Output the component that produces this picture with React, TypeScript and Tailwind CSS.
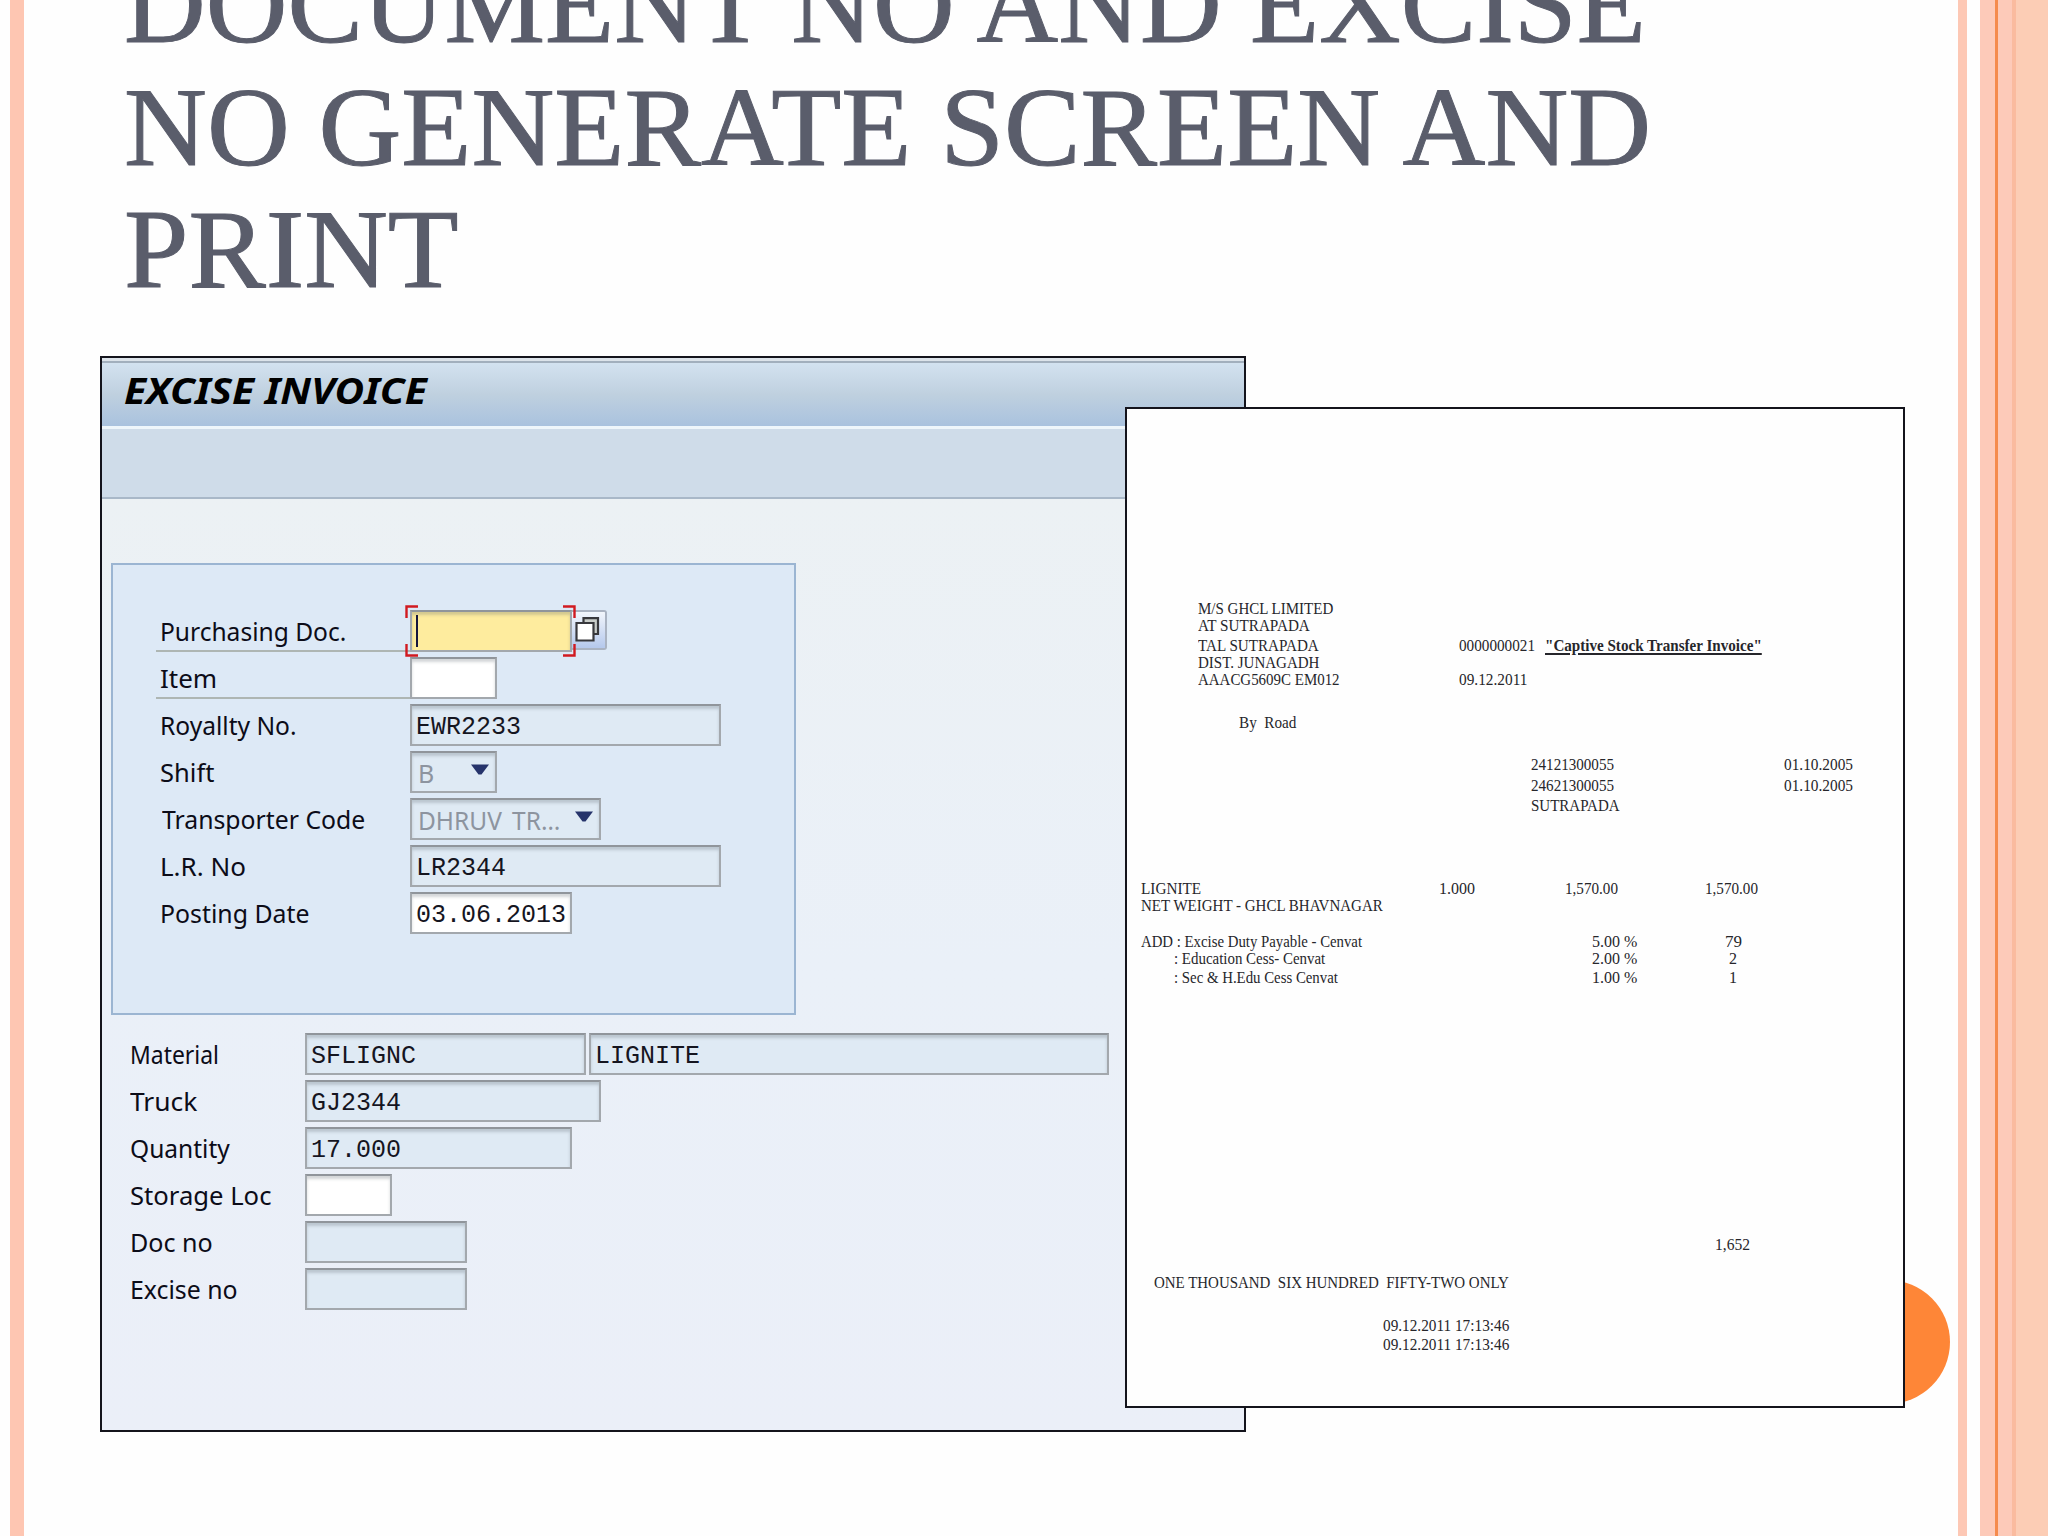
import { useLayoutEffect, useRef, useState, type ReactNode } from 'react';
import clsx from 'clsx';

// ─── Text squeezed to the width of its box ───────────────────────────────────

function Fit({ children, className }: { children: string; className: string }) {
    const box = useRef<HTMLSpanElement>(null);
    const text = useRef<HTMLSpanElement>(null);
    const [scale, setScale] = useState(1);

    useLayoutEffect(() => {
        if (box.current && text.current) {
            setScale(box.current.clientWidth / text.current.offsetWidth);
        }
    }, [children]);

    return (
        <span ref={box} className={clsx('block shrink-0', className)}>
            <span
                ref={text}
                className="inline-block origin-left whitespace-pre"
                style={{ transform: `scaleX(${scale})` }}
            >
                {children}
            </span>
        </span>
    );
}

// ─── Form parts ──────────────────────────────────────────────────────────────

function Field({ className, white = false, children }: { className: string; white?: boolean; children?: ReactNode }) {
    return (
        <div
            className={clsx(
                'flex h-[42px] shrink-0 items-center border-2 border-[#a3a8ad] border-t-[#90959b] pt-[5px] pl-1 font-["Liberation_Mono",monospace] text-[25px] leading-none whitespace-pre text-[#15151f]',
                white ? 'bg-white' : 'bg-[#dfeaf4]',
                'shadow-[inset_0_3px_3px_rgba(80,90,100,0.25)]',
                className,
            )}
        >
            {children}
        </div>
    );
}

function Row({ label, width, labelBox, underline = false, children }: {
    label: string; width: string; labelBox: string; underline?: boolean; children: ReactNode;
}) {
    return (
        <div className="flex h-[42px]">
            <div
                className={clsx(
                    'shrink-0 border-b-2 pt-[1px] text-[26px] leading-[40px] text-[#0c0c18]',
                    underline ? 'border-[#aeb6b3]' : 'border-transparent',
                    labelBox,
                )}
            >
                <Fit className={width}>{label}</Fit>
            </div>
            {children}
        </div>
    );
}

function Arrow() {
    return (
        <svg className="mb-[8px]" width="18" height="11" viewBox="0 0 18 11">
            <path d="M0 0.5H18L10.5 10.5H7.5Z" fill="#26346b" />
        </svg>
    );
}

function FocusCorners() {
    return (
        <svg className="absolute -top-[5px] -left-[5px]" width="171" height="52" viewBox="0 0 171 52" fill="none" stroke="#d11a20" strokeWidth="2.4">
            <path d="M1.5 13V1.5H13M158 1.5H169.5V13M1.5 39V50.5H13M158 50.5H169.5V39" />
        </svg>
    );
}

function MatchcodeButton() {
    return (
        <div className="flex h-[40px] w-[35px] items-center rounded-r-[3px] border-t-2 border-r-2 border-b-2 border-[#aab3c2] bg-linear-to-b from-[#f2f6fc] to-[#b5c8ec] pl-[3px]">
            <svg width="25" height="25" viewBox="0 0 25 25" stroke="#38383c" strokeWidth="2.2">
                <path d="M8.5 1.2H23V17H8.5Z" fill="#c9cdc9" />
                <path d="M1.5 6H18.5V23.5H1.5Z" fill="#fff" />
            </svg>
        </div>
    );
}

const DOC_LABEL = 'w-[254px] pl-[4px]';
const ITEM_LABEL = 'w-[176px] pl-[1px]';

function ExciseForm() {
    return (
        <div className="ml-[100px] flex h-[1076px] w-[1146px] shrink-0 flex-col border-2 border-[#14141c] bg-[#ebf0f8]">
            <div className="h-[5px] border-b-2 border-[#a2afbd] bg-[#dce3ea]" />
            <div className="h-[63px] bg-linear-to-b from-[#d3e2f0] via-[#bfd0df] to-[#a9c2de] pl-[22px] text-[35px] leading-[55px] font-bold text-black italic">
                <Fit className="w-[303px]">EXCISE INVOICE</Fit>
            </div>
            <div className="h-[73px] border-t-[3px] border-b-2 border-t-[#eef6fb] border-b-[#a9b8c8] bg-[#cfdce9]" />

            <div className="flex flex-1 flex-col bg-linear-to-b from-[#ecf1f4] via-[#eaf0f8] to-[#ebeff8]">
                <div className="mt-[64px] ml-[9px] flex h-[452px] w-[685px] flex-col gap-[5px] border-2 border-[#9bb5d2] bg-[#dde9f6] pt-[45px] pl-[43px]">
                    <Row label="Purchasing Doc." width="w-[186px]" labelBox={DOC_LABEL} underline>
                        <div className="relative">
                            <Field className="w-[162px] bg-[#feec9e]!">
                                <span className="-mt-1 h-[32px] w-[2px] bg-[#15153c]" />
                            </Field>
                            <FocusCorners />
                        </div>
                        <MatchcodeButton />
                    </Row>
                    <Row label="Item" width="w-[57px]" labelBox={DOC_LABEL} underline>
                        <Field white className="w-[87px]" />
                    </Row>
                    <Row label="Royallty No." width="w-[137px]" labelBox={DOC_LABEL}>
                        <Field className="w-[311px]">EWR2233</Field>
                    </Row>
                    <Row label="Shift" width="w-[54px]" labelBox={DOC_LABEL}>
                        <Field className="w-[87px] justify-between pt-[3px]! pr-[6px] font-['Noto_Sans',sans-serif]! text-[#8d949f]!">
                            <Fit className="ml-[2px] w-[16px]">B</Fit>
                            <Arrow />
                        </Field>
                    </Row>
                    <Row label="Transporter Code" width="w-[203px]" labelBox="w-[254px] pl-[6px]">
                        <Field className="w-[191px] justify-between pt-[3px]! pr-[6px] font-['Noto_Sans',sans-serif]! text-[#8d949f]!">
                            <Fit className="ml-[2px] w-[142px] [word-spacing:4px]">DHRUV TR…</Fit>
                            <Arrow />
                        </Field>
                    </Row>
                    <Row label="L.R. No" width="w-[86px]" labelBox={DOC_LABEL}>
                        <Field className="w-[311px]">LR2344</Field>
                    </Row>
                    <Row label="Posting Date" width="w-[149px]" labelBox={DOC_LABEL}>
                        <Field white className="w-[162px]">03.06.2013</Field>
                    </Row>
                </div>

                <div className="mt-[18px] ml-[27px] flex flex-col gap-[5px]">
                    <Row label="Material" width="w-[89px]" labelBox={ITEM_LABEL}>
                        <Field className="w-[281px]">SFLIGNC</Field>
                        <Field className="ml-[3px] w-[520px]">LIGNITE</Field>
                    </Row>
                    <Row label="Truck" width="w-[67px]" labelBox={ITEM_LABEL}>
                        <Field className="w-[296px]">GJ2344</Field>
                    </Row>
                    <Row label="Quantity" width="w-[100px]" labelBox={ITEM_LABEL}>
                        <Field className="w-[267px]">17.000</Field>
                    </Row>
                    <Row label="Storage Loc" width="w-[141px]" labelBox={ITEM_LABEL}>
                        <Field white className="w-[87px]" />
                    </Row>
                    <Row label="Doc no" width="w-[83px]" labelBox={ITEM_LABEL}>
                        <Field className="w-[162px]" />
                    </Row>
                    <Row label="Excise no" width="w-[108px]" labelBox={ITEM_LABEL}>
                        <Field className="w-[162px]" />
                    </Row>
                </div>
            </div>
        </div>
    );
}

// ─── Printed invoice ─────────────────────────────────────────────────────────

function InvoicePrint() {
    return (
        <div className="absolute top-[407px] left-[1125px] flex h-[1001px] w-[780px] flex-col border-2 border-[#14141c] bg-[#fefefe] pt-[192px] font-['Liberation_Serif',serif] text-[16px] leading-[16px] text-[#26262b]">
            <div className="flex h-[17px] pl-[71px]"><Fit className="w-[135px]">M/S GHCL LIMITED</Fit></div>
            <div className="flex h-[20px] pl-[71px]"><Fit className="w-[112px]">AT SUTRAPADA</Fit></div>
            <div className="flex h-[17px] pl-[71px]">
                <Fit className="w-[121px]">TAL SUTRAPADA</Fit>
                <Fit className="ml-[140px] w-[76px]">0000000021</Fit>
                <span className="ml-[10px] font-bold">
                    <Fit className="w-[217px] [&>span]:underline [&>span]:decoration-2 [&>span]:underline-offset-[2px]">"Captive Stock Transfer Invoice"</Fit>
                </span>
            </div>
            <div className="flex h-[17px] pl-[71px]"><Fit className="w-[121px]">DIST. JUNAGADH</Fit></div>
            <div className="flex h-[43px] pl-[71px]">
                <Fit className="w-[142px]">AAACG5609C EM012</Fit>
                <Fit className="ml-[119px] w-[68px]">09.12.2011</Fit>
            </div>
            <div className="flex h-[42px] pl-[112px]"><Fit className="w-[57px]">By  Road</Fit></div>
            <div className="flex h-[21px] pl-[404px]">
                <Fit className="w-[83px]">24121300055</Fit>
                <Fit className="ml-[170px] w-[69px]">01.10.2005</Fit>
            </div>
            <div className="flex h-[20px] pl-[404px]">
                <Fit className="w-[83px]">24621300055</Fit>
                <Fit className="ml-[170px] w-[69px]">01.10.2005</Fit>
            </div>
            <div className="flex h-[83px] pl-[404px]"><Fit className="w-[89px]">SUTRAPADA</Fit></div>

            <div className="flex h-[17px] pl-[14px]">
                <Fit className="w-[60px]">LIGNITE</Fit>
                <Fit className="ml-[238px] w-[36px]">1.000</Fit>
                <Fit className="ml-[90px] w-[53px]">1,570.00</Fit>
                <Fit className="ml-[87px] w-[53px]">1,570.00</Fit>
            </div>
            <div className="flex h-[36px] pl-[14px]"><Fit className="w-[242px]">NET WEIGHT - GHCL BHAVNAGAR</Fit></div>

            <div className="flex h-[17px] pl-[14px]">
                <Fit className="w-[221px]">ADD : Excise Duty Payable - Cenvat</Fit>
                <Fit className="ml-[230px] w-[45px]">5.00 %</Fit>
                <Fit className="ml-[88px] w-[17px]">79</Fit>
            </div>
            <div className="flex h-[19px] pl-[47px]">
                <Fit className="w-[151px]">: Education Cess- Cenvat</Fit>
                <Fit className="ml-[267px] w-[45px]">2.00 %</Fit>
                <Fit className="ml-[92px] w-[8px]">2</Fit>
            </div>
            <div className="flex h-[267px] pl-[47px]">
                <Fit className="w-[164px]">: Sec & H.Edu Cess Cenvat</Fit>
                <Fit className="ml-[254px] w-[45px]">1.00 %</Fit>
                <Fit className="ml-[92px] w-[8px]">1</Fit>
            </div>

            <div className="flex h-[38px] pl-[588px]"><Fit className="w-[35px]">1,652</Fit></div>
            <div className="flex h-[43px] pl-[27px]"><Fit className="w-[355px]">ONE THOUSAND  SIX HUNDRED  FIFTY-TWO ONLY</Fit></div>
            <div className="flex h-[19px] pl-[256px]"><Fit className="w-[126px]">09.12.2011 17:13:46</Fit></div>
            <div className="flex pl-[256px]"><Fit className="w-[126px]">09.12.2011 17:13:46</Fit></div>
        </div>
    );
}

// ─── Slide ───────────────────────────────────────────────────────────────────

export default function App() {
    return (
        <div className="relative flex h-[1536px] w-[2048px] overflow-hidden bg-[#fefefe] font-['Noto_Sans',sans-serif]">
            <div className="ml-[10px] w-[14px] shrink-0 bg-[#fec6b2]" />

            <div className="-ml-[24px] flex w-[1958px] shrink-0 flex-col">
                <h1 className="-mt-[57px] mb-[45px] ml-[124px] shrink-0 font-['Liberation_Serif',serif] text-[112px] leading-[122.6px] text-[#5a5d6b] [-webkit-text-stroke:1px_#5a5d6b]">
                    <Fit className="w-[1522px]">DOCUMENT NO AND EXCISE</Fit>
                    <Fit className="w-[1527px]">NO GENERATE SCREEN AND</Fit>
                    <Fit className="w-[335px]">PRINT</Fit>
                </h1>
                <ExciseForm />
            </div>

            {/* Right-hand stripes */}
            <div className="w-[9px] shrink-0 bg-[#fdc8b5]" />
            <div className="ml-[13px] flex flex-1 bg-[#fdcab9]">
                <div className="ml-[15px] w-[3px] bg-[#f58b4d]" />
                <div className="ml-[14px] w-[4px] bg-[#fabb9f]" />
                <div className="flex-1 bg-[#fccdb5]" />
            </div>

            <div className="absolute top-[1280px] left-[1826px] size-[124px] rounded-full bg-[#fe8637]" />
            <InvoicePrint />
        </div>
    );
}
